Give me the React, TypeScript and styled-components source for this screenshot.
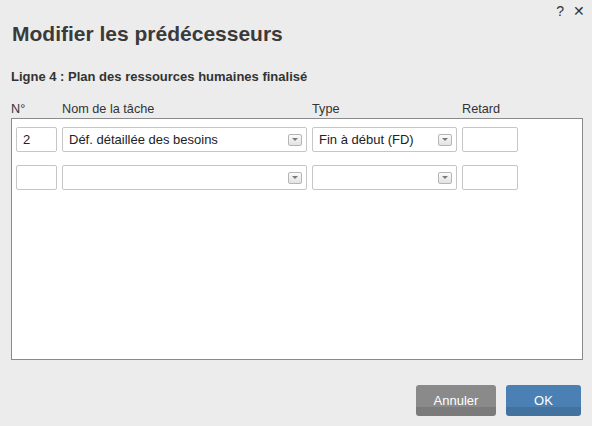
import React from "react";
import styled, { createGlobalStyle } from "styled-components";

const Global = createGlobalStyle`
  html, body { margin: 0; padding: 0; background: #ececec; }
  body { font-family: "Liberation Sans", Arial, sans-serif; color: #333; }
`;

const Dialog = styled.div`
  width: 592px;
  height: 426px;
  box-sizing: border-box;
  padding: 0 9px 0 11px;
  display: flex;
  flex-direction: column;
  position: relative;
`;

const TopIcons = styled.div`
  position: absolute;
  top: 3px;
  right: 7px;
  display: flex;
  gap: 9px;
  font-size: 14px;
  color: #333;
`;

const Title = styled.h1`
  margin: 22px 0 0 1px;
  font-size: 21px;
  font-weight: bold;
  line-height: 24px;
  color: #3a3a3a;
`;

const Subtitle = styled.div`
  margin: 23px 0 0 0;
  font-size: 13px;
  font-weight: bold;
  line-height: 15px;
  color: #333;
`;

const HeaderRow = styled.div`
  margin-top: 18px;
  display: grid;
  grid-template-columns: 46px 245px 145px 56px;
  column-gap: 5px;
  font-size: 12.7px;
  line-height: 15px;
  height: 16px;
  color: #333;
`;

const Box = styled.div`
  flex: 0 0 auto;
  height: 242px;
  background: #fff;
  border: 1px solid #8a8a8a;
  padding: 8px 4px;
  display: flex;
  flex-direction: column;
  gap: 13px;
  box-sizing: border-box;
  width: 572px;
`;

const Row = styled.div`
  display: grid;
  grid-template-columns: 41px 245px 145px 56px;
  column-gap: 5px;
  height: 25px;
`;

const Field = styled.div`
  box-sizing: border-box;
  height: 25px;
  border: 1px solid #c6c6c6;
  border-radius: 2px;
  background: #fff;
  display: flex;
  align-items: center;
  padding: 0 6px;
  font-size: 13px;
  color: #222;
  justify-content: space-between;
`;

const Arrow = styled.div`
  width: 14px;
  height: 12px;
  box-sizing: border-box;
  border: 1px solid #b5b5b5;
  border-radius: 2px;
  background: linear-gradient(#fbfbfb, #e2e2e2);
  display: flex;
  align-items: center;
  justify-content: center;
  margin-right: -2px;
  &::after {
    content: "";
    border-left: 3px solid transparent;
    border-right: 3px solid transparent;
    border-top: 3px solid #7a7a7a;
  }
`;

const Footer = styled.div`
  margin-top: 25px;
  display: flex;
  justify-content: flex-end;
  gap: 10px;
  padding-right: 2px;
`;

const Button = styled.button<{ $primary?: boolean }>`
  height: 31px;
  width: ${(p) => (p.$primary ? "75px" : "80px")};
  border: none;
  border-radius: 3px;
  color: #fff;
  font-family: "Liberation Sans", Arial, sans-serif;
  font-size: 13px;
  padding: 0;
  background: ${(p) =>
    p.$primary
      ? "linear-gradient(#4a80b4 0%, #4a80b4 70%, #44729f 70%, #44729f 100%)"
      : "linear-gradient(#8a8a8a 0%, #8a8a8a 70%, #7b7b7b 70%, #7b7b7b 100%)"};
`;

const Select = ({ value }: { value?: string }) => (
  <Field>
    <span>{value}</span>
    <Arrow />
  </Field>
);

export default function App() {
  return (
    <>
      <Global />
      <Dialog>
        <TopIcons>
          <span>?</span>
          <span>✕</span>
        </TopIcons>
        <Title>Modifier les prédécesseurs</Title>
        <Subtitle>Ligne 4 : Plan des ressources humaines finalisé</Subtitle>
        <HeaderRow>
          <span>N°</span>
          <span>Nom de la tâche</span>
          <span>Type</span>
          <span>Retard</span>
        </HeaderRow>
        <Box>
          <Row>
            <Field>2</Field>
            <Select value="Déf. détaillée des besoins" />
            <Select value="Fin à début (FD)" />
            <Field />
          </Row>
          <Row>
            <Field />
            <Select />
            <Select />
            <Field />
          </Row>
        </Box>
        <Footer>
          <Button>Annuler</Button>
          <Button $primary>OK</Button>
        </Footer>
      </Dialog>
    </>
  );
}
